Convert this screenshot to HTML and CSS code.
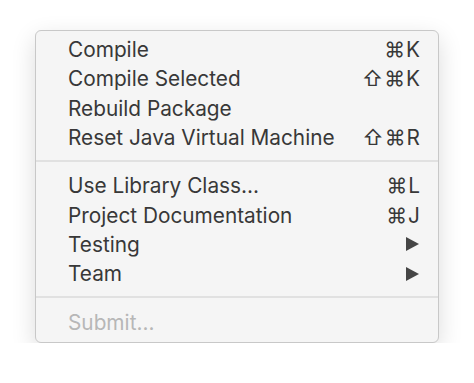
FILE: index.html
```html
<!DOCTYPE html>
<html>
<head>
  <title>Menu</title>
  <link rel="stylesheet" href="styles.css">
</head>
<body>
  <div class="menu">
    <div class="group">
      <div class="item"><span>Compile</span><span class="key">⌘K</span></div>
      <div class="item"><span>Compile Selected</span><span class="key">⇧⌘K</span></div>
      <div class="item"><span>Rebuild Package</span></div>
      <div class="item"><span>Reset Java Virtual Machine</span><span class="key">⇧⌘R</span></div>
    </div>
    <div class="sep"></div>
    <div class="group">
      <div class="item"><span>Use Library Class...</span><span class="key">⌘L</span></div>
      <div class="item"><span>Project Documentation</span><span class="key">⌘J</span></div>
      <div class="item"><span>Testing</span><span class="arrow"></span></div>
      <div class="item"><span>Team</span><span class="arrow"></span></div>
    </div>
    <div class="sep"></div>
    <div class="group">
      <div class="item disabled"><span>Submit...</span></div>
    </div>
  </div>
</body>
</html>
```

FILE: styles.css
```css
html, body {
  margin: 0;
  padding: 0;
  background: #ffffff;
  font-family: "Inter", "Liberation Sans", sans-serif;
}
body {
  padding: 30px 0 0 35px;
}
.menu {
  width: 404px;
  box-sizing: border-box;
  background: #f5f5f5;
  border: 1px solid #c8c8c8;
  border-radius: 6px;
  box-shadow: 0 8px 24px rgba(0,0,0,0.14);
  padding: 4px 0 5px;
}
.group {
  display: flex;
  flex-direction: column;
}
.item {
  display: flex;
  justify-content: space-between;
  align-items: center;
  height: 29.3px;
  padding: 0 17px 0 32px;
  font-size: 20.8px;
  color: #383838;
}
.key {
  letter-spacing: 1px;
}
/* submenu triangle */
.arrow {
  width: 0;
  height: 0;
  border-left: 13px solid #454545;
  border-top: 7px solid transparent;
  border-bottom: 7px solid transparent;
  margin-right: 2px;
}
.disabled {
  color: #b7b7b7;
}
.sep {
  height: 2px;
  background: #e1e1e1;
  margin: 8px 0 9px;
}
```
